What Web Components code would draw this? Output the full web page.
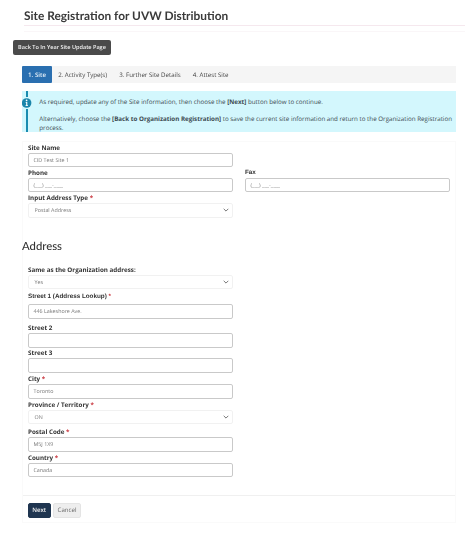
<!DOCTYPE html>
<html lang="en"><head><meta charset="utf-8"><title>Site Registration</title>
<style>
html,body{margin:0;padding:0;background:#fff;height:538px;overflow:hidden}
body{font-family:"Open Sans","Liberation Sans",sans-serif;color:#333;text-rendering:geometricPrecision}
</style></head><body>
<site-page>
  <page-header slot="header">Site Registration for UVW Distribution</page-header>
  <back-button slot="back">Back To In Year Site Update Page</back-button>
  <step-tabs slot="tabs">
    <step-tab active>1. Site</step-tab><step-tab>2. Activity Type(s)</step-tab><step-tab>3. Further Site Details</step-tab><step-tab>4. Attest Site</step-tab>
  </step-tabs>
  <info-alert slot="alert">
    <p>As required, update any of the Site information, then choose the <b>[Next]</b> button below to continue.</p>
    <p>Alternatively, choose the <b>[Back to Organization Registration]</b> to save the current site information and return to the Organization Registration<br>process.</p>
  </info-alert>
  <form-panel slot="panel">
    <form-field label="Site Name" value="CID Test Site 1"></form-field>
    <div style="display:grid;grid-template-columns:205px 205px;column-gap:12px;margin-top:.8px">
      <form-field label="Phone" value="(___) ___-____"></form-field>
      <form-field label="Fax" value="(___) ___-____" arial></form-field>
    </div>
    <form-field label="Input Address Type" required select value="Postal Address" style="--mt:.8px"></form-field>
    <section-heading>Address</section-heading>
    <form-field label="Same as the Organization address:" select value="Yes"></form-field>
    <form-field label="Street 1 (Address Lookup)" required arial value="446 Lakeshore Ave." style="--mt:3.4px;--lg:1.7px"></form-field>
    <form-field label="Street 2" style="--mt:4.4px"></form-field>
    <form-field label="Street 3" style="--mt:.6px"></form-field>
    <form-field label="City" required value="Toronto" style="--mt:1.7px"></form-field>
    <form-field label="Province / Territory" required select value="ON" style="--mt:1px"></form-field>
    <form-field label="Postal Code" required value="M5J 1X9" style="--mt:3px"></form-field>
    <form-field label="Country" required value="Canada" style="--mt:.8px"></form-field>
    <form-actions slot="footer"><action-button primary>Next</action-button><action-button>Cancel</action-button></form-actions>
  </form-panel>
</site-page>
<script>
function def(name, css, html){
  customElements.define(name, class extends HTMLElement{
    constructor(){super();this.attachShadow({mode:"open"});}
    connectedCallback(){ this.shadowRoot.innerHTML="<style>"+css+"</style>"+(typeof html==="function"?html(this):html); }
  });
}
def("site-page",":host{display:block;width:474px;height:538px;box-sizing:border-box;padding-top:9px;filter:blur(.25px)}",
 '<slot name="header"></slot><slot name="back"></slot><slot name="tabs"></slot><slot name="alert"></slot><slot name="panel"></slot>');
def("page-header",`:host{display:block;margin:0 9px 0 24px;height:22px;border-bottom:1px solid #faf6f8}
 .t{border-bottom:1px solid #f5e8ee;font:700 11.9px/14px Lato,"Liberation Sans",sans-serif;color:#3a3a3a;padding-bottom:1.5px}`,
 '<div class="t"><slot></slot></div>');
def("back-button",`:host{display:block;margin:8px 0 0 13px;width:98px;height:15px;box-sizing:border-box;background:#4a4a4a;border-radius:2px;color:#f2f2f2;font:600 5.55px/15px "Open Sans",sans-serif;text-align:center;white-space:nowrap}`,'<slot></slot>');
def("step-tabs",`:host{display:flex;margin:10.5px 18px 0 22px;height:17px;background:#f5f5f5}`,'<slot></slot>');
def("step-tab",`:host{display:block;padding:0 6.1px;font:400 6.15px/17px "Open Sans",sans-serif;color:#444;white-space:nowrap}
 :host([active]){background:#2a6fb0;color:#e8f1f8;font-weight:600;border-radius:1px}`,'<slot></slot>');
def("info-alert",`:host{display:block;position:relative;margin:8px 18px 0 22px;height:41.5px;box-sizing:border-box;background:#d3f7fd;padding:6px 0 0 17.3px;font:400 6.22px/9px "Open Sans",sans-serif;color:#3c4a50}
 .bar{position:absolute;left:3.5px;top:0;bottom:0;width:2px;background:#1b8cb0}
 svg{position:absolute;left:0;top:6px;width:10px;height:12px}
 ::slotted(p){margin:0 0 8.9px}`,
 '<div class="bar"></div><svg viewBox="0 0 10 12"><rect width="10" height="12" fill="#d3f7fd"/><circle cx="4.6" cy="6" r="4.8" fill="#1b85aa"/><circle cx="4.6" cy="3.4" r=".85" fill="#fff"/><path d="M3.6 5h1.7v3.2h.7v.8H3.5v-.8h.7V5.8h-.6z" fill="#fff"/></svg><slot></slot>');
def("form-panel",`:host{margin:8.5px 18px 0 22px;height:382px;box-sizing:border-box;border:1px solid #fafafa;padding:1px 5px 0 5px;display:flex;flex-direction:column}
 .b{flex:1}`,'<slot></slot><div class="b"></div><slot name="footer"></slot>');
def("form-field",`:host{display:block;width:205px;margin-top:var(--mt,0)}
 .l{height:10px;margin-bottom:var(--lg,0);font:700 6.25px/10px "Open Sans",sans-serif;color:#333;white-space:nowrap}
 .l.a{font:700 6.3px/10px "Liberation Sans",sans-serif}
 .r{color:#c8323a}
 .c{height:14.5px;box-sizing:border-box;border:1px solid #c9c9c9;border-radius:2px;padding:0 6px 0 4.5px;font:400 5.35px/12.5px "Open Sans",sans-serif;color:#777;background:#fff;display:flex;justify-content:space-between;align-items:center;white-space:nowrap}
 .c.s{border-color:#f1f1f1;padding-left:5.5px;padding-right:3.5px}
 svg{width:6px;height:4px}`,
 el=>{const g=n=>el.getAttribute(n)||"";const sel=el.hasAttribute("select");
  return `<div class="l ${el.hasAttribute("arial")?"a":""}">${g("label")}${el.hasAttribute("required")?' <span class="r">*</span>':""}</div>
  <div class="c ${sel?"s":""}"><span>${g("value")}</span>${sel?'<svg viewBox="0 0 6 4"><path d="M.7.8 3 3.1 5.3.8" fill="none" stroke="#555" stroke-width=".8"/></svg>':""}</div>`;});
def("section-heading",`:host{display:block;margin:21px 0 10px -6px;font:500 11.3px/16px Lato,"Liberation Sans",sans-serif;color:#333}`,'<slot></slot>');
def("form-actions",`:host{display:flex;gap:2.5px;margin:0 -5px 4px -5px;padding:7.5px 5px 0;border-top:1px solid #f0f0f0}`,'<slot></slot>');
def("action-button",`:host{display:block;height:14.5px;width:28px;text-align:center;box-sizing:border-box;background:#eeeeee;border:1px solid #e4e4e4;border-radius:2px;color:#666;font:400 6.1px/12.5px "Open Sans",sans-serif}
 :host([primary]){background:#1f3550;border-color:#1f3550;color:#f2f2f2;width:22.5px;font-weight:600}`,'<slot></slot>');
</script>
</body></html>
